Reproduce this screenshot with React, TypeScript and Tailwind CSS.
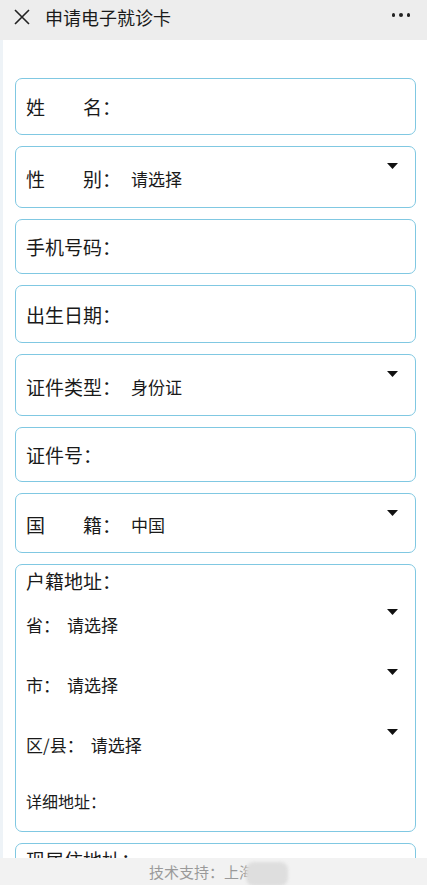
import React from "react";

const FONT = { fontFamily: '"Noto Sans CJK SC", "Noto Sans", sans-serif' };

function Caret() {
  return (
    <svg width="11" height="6" viewBox="0 0 11 6" className="block">
      <path d="M0 0 H11 L5.5 6 Z" fill="#111" />
    </svg>
  );
}

function Label({ chars, justify }: { chars: string; justify?: boolean }) {
  if (justify) {
    return (
      <span className="flex items-center">
        <span className="flex w-[76px] justify-between">
          {chars.split("").map((c, i) => (
            <span key={i}>{c}</span>
          ))}
        </span>
        <span>：</span>
      </span>
    );
  }
  return <span>{chars}：</span>;
}

function InputCard({ h, label, justify }: { h: string; label: string; justify?: boolean }) {
  return (
    <div className={`${h} flex items-center rounded-[7px] border-[1.5px] border-[#80c8e2] bg-white pl-[10px] text-[19px] leading-none text-[#1a1a1a]`}>
      <Label chars={label} justify={justify} />
    </div>
  );
}

function SelectCard({ h, label, value, justify }: { h: string; label: string; value: string; justify?: boolean }) {
  return (
    <div className={`${h} relative flex items-center rounded-[7px] border-[1.5px] border-[#80c8e2] bg-white pl-[10px] pt-[2px] text-[19px] leading-none text-[#1a1a1a]`}>
      <Label chars={label} justify={justify} />
      <span className="ml-[10px] text-[17px]">{value}</span>
      <span className="absolute right-[17px] top-[16px]">
        <Caret />
      </span>
    </div>
  );
}

function AddrRow({ label, value }: { label: string; value: string }) {
  return (
    <div className="relative flex h-[60px] items-center pt-[3px] text-[17px] leading-none">
      <span>{label}：</span>
      <span className="ml-[7px]">{value}</span>
      <span className="absolute right-[17px] top-[16px]">
        <Caret />
      </span>
    </div>
  );
}

export default function App() {
  return (
    <div className="min-h-[885px] w-[427px] bg-white" style={FONT}>
      <div className="flex h-[40px] items-center bg-[#ededed] pl-[13px] pr-[17px]">
        <svg width="18" height="18" viewBox="0 0 18 18" className="mt-[-6px]">
          <path d="M2 2 L16 16 M16 2 L2 16" stroke="#222" strokeWidth="1.6" />
        </svg>
        <span className="ml-[14px] mt-[-6px] text-[18px] leading-none text-[#1a1a1a]">申请电子就诊卡</span>
        <span className="ml-auto mt-[-10px] flex gap-[4px]">
          <span className="h-[3.5px] w-[3.5px] rounded-full bg-[#222]" />
          <span className="h-[3.5px] w-[3.5px] rounded-full bg-[#222]" />
          <span className="h-[3.5px] w-[3.5px] rounded-full bg-[#222]" />
        </span>
      </div>

      <div className="flex flex-col gap-[11px] border-l-[3px] border-[#eef3f7] pb-[60px] pl-[12px] pr-[11px] pt-[38px]">
        <InputCard h="h-[57px]" label="姓名" justify />
        <SelectCard h="h-[62px]" label="性别" value="请选择" justify />
        <InputCard h="h-[55px]" label="手机号码" />
        <InputCard h="h-[58px]" label="出生日期" />
        <SelectCard h="h-[62px]" label="证件类型" value="身份证" />
        <InputCard h="h-[55px]" label="证件号" />
        <SelectCard h="h-[60px]" label="国籍" value="中国" justify />

        <div className="flex h-[268px] flex-col rounded-[7px] border-[1.5px] border-[#80c8e2] bg-white pl-[10px] text-[#1a1a1a]">
          <div className="mt-[4px] text-[19px] leading-[24px]">户籍地址：</div>
          <AddrRow label="省" value="请选择" />
          <AddrRow label="市" value="请选择" />
          <AddrRow label="区/县" value="请选择" />
          <div className="flex h-[56px] items-center text-[16px] leading-none">详细地址：</div>
        </div>

        <div className="flex h-[120px] flex-col rounded-[7px] border-[1.5px] border-[#80c8e2] bg-white pl-[10px] text-[#1a1a1a]">
          <div className="mt-[4px] text-[19px] leading-[24px]">现居住地址：</div>
        </div>
      </div>

      <div className="fixed bottom-0 left-0 flex h-[27px] w-[427px] items-center justify-center bg-[#f2f2f2] pl-[10px] text-[15px] leading-none text-[#9a9a9a]">
        <span>技术支持：上海</span>
        <span className="-ml-[8px] mt-[4px] h-[24px] w-[42px] rounded-[8px] bg-[#dedede] blur-[1.5px]" />
      </div>
    </div>
  );
}
